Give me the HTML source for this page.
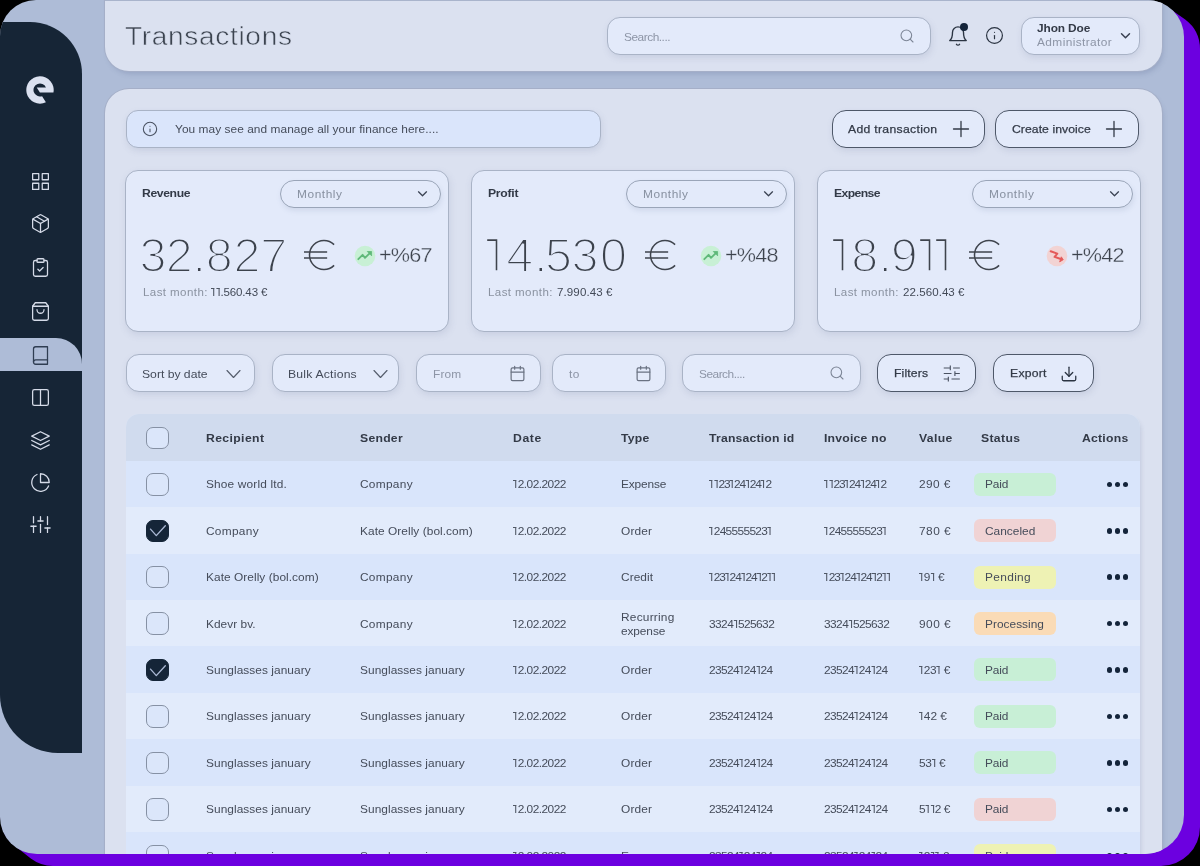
<!DOCTYPE html>
<html>
<head>
<meta charset="utf-8">
<title>Transactions</title>
<style>
*{box-sizing:border-box;margin:0;padding:0}
html,body{width:1200px;height:866px;overflow:hidden;background:#000;font-family:"Liberation Sans",sans-serif;color:#3a4252}
.abs{position:absolute}
#purple{position:absolute;left:0;top:0}
#frame{will-change:transform;position:absolute;left:0;top:0;width:1184px;height:854px;background:#aebcd7;border-radius:36px 37px 39px 37px;overflow:hidden}
#side{position:absolute;left:0;top:22px;width:82px;height:731px;background:#162536;border-radius:0 52px 0 58px}
#active{position:absolute;left:0;top:316px;width:82px;height:33px;background:#aebcd7;border-radius:0 26px 0 0}
.sico{position:absolute;left:0;width:82px;display:block}
.panel{position:absolute;left:104.3px;width:1058.4px;background:#dbe1f0;border-radius:25px;border:1px solid rgba(120,135,168,.55);box-shadow:2px 4px 5px -2px rgba(90,105,145,.26)}
#head{top:-40px;height:111.8px}
#main{top:88px;height:820px}
.field{position:absolute;background:#e3eafa;border:1px solid #a9b3c6;border-radius:13px;box-shadow:1px 3px 6px rgba(110,125,160,.17)}
.btn{position:absolute;background:#e3eafa;border:1px solid #4e5869;border-radius:14px;box-shadow:1px 3px 6px rgba(110,125,160,.17)}
.t{position:absolute;white-space:nowrap;transform-origin:0 0}
.card{position:absolute;top:170px;width:324px;height:162px;background:#e3eafa;border:1px solid #a9b3c6;border-radius:13px;box-shadow:1px 3px 7px rgba(110,125,160,.17)}
.pill{position:absolute;width:161px;height:28px;border:1px solid #9aa5b8;border-radius:14px;background:#e3eafa;box-shadow:1px 3px 5px rgba(110,125,160,.15)}
#table{box-shadow:3px 3px 4px -2px rgba(110,125,160,.22);position:absolute;left:126px;top:414.3px;width:1014px;height:480px;border-radius:13px 13px 0 0;overflow:hidden;background:#e2ebfb}
.row{position:absolute;left:0;width:1014px;height:46.43px}
.row.h{background:#d0dbee}
.row.o{background:#d9e5fb}
.row.e{background:#e2ebfb}
.cb{position:absolute;left:20.4px;top:12.4px;width:22.4px;height:22.4px;border:1.2px solid #8691a4;border-radius:7px;background:#dbe6fa}
.cb.on{background:#152538;border-color:#152538}
.st{position:absolute;left:848px;top:12px;width:82px;height:23px;border-radius:6px}
.paid{background:#c8efd6}.canc{background:#f0d3d4}.pend{background:#eef2b4}.proc{background:#fadbb6}
.dots{position:absolute;left:980.7px;top:20.9px;width:24px;height:6px}
.dots i{position:absolute;top:0;width:5.5px;height:5.5px;border-radius:50%;background:#14243a}
.dots i:nth-child(2){left:8.15px}.dots i:nth-child(3){left:16.3px}
.bigc{position:absolute;top:226.5px;width:40px;text-align:center;font-size:48.5px;line-height:56px;color:#3c424c;-webkit-text-stroke:2.1px #e3eafa}
.n1{display:inline-block;box-sizing:border-box;width:3.1px;height:7.9px;border-top:1px solid currentColor;border-right:1.05px solid currentColor;margin:0 .9px 0 .4px;opacity:.92}
</style>
</head>
<body>
<svg id="purple" width="1200" height="866" viewBox="0 0 1200 866"><path d="M0.8,37.8A37,37 0 0 1 37.8,0.8H1147A37,37 0 0 1 1169.20,8.20L1185.20,19.40A37,37 0 0 1 1200,49V827A39,39 0 0 1 1161,866H53A37,37 0 0 1 30.80,858.60L15.60,846.60A37,37 0 0 1 0.8,817Z" fill="#6c00e0"/></svg>
<div id="frame">
  <div id="side">
    <div id="active"></div>
    <svg class="abs" style="left:25.2px;top:52.8px" width="30" height="30" viewBox="-15 -15 30 30"><path d="M-3.3,-2.6H5.96A6.5,6.5 0 1 0 2.09,6.150L5.900,12.360A13.700,13.700 0 1 1 13.450,2.600H-0.100Z" fill="#dbe1f0"/></svg>
    <svg class="abs" style="left:30px;top:148.75px" width="21" height="21" viewBox="0 0 24 24" fill="none" stroke="#d5dbe8" stroke-width="1.45" stroke-linecap="round" stroke-linejoin="round"><rect x="3" y="3" width="7" height="7"/><rect x="14" y="3" width="7" height="7"/><rect x="14" y="14" width="7" height="7"/><rect x="3" y="14" width="7" height="7"/></svg>
    <svg class="abs" style="left:30px;top:190.90px" width="21" height="21" viewBox="0 0 24 24" fill="none" stroke="#d5dbe8" stroke-width="1.45" stroke-linecap="round" stroke-linejoin="round"><line x1="16.5" y1="9.4" x2="7.5" y2="4.21"/><path d="M21 16V8a2 2 0 0 0-1-1.730l-7-4a2 2 0 0 0-2 0l-7 4A2 2 0 0 0 3 8v8a2 2 0 0 0 1 1.730l7 4a2 2 0 0 0 2 0l7-4A2 2 0 0 0 21 16z"/><polyline points="3.270 6.960 12 12.010 20.730 6.960"/><line x1="12" y1="22.080" x2="12" y2="12"/></svg>
    <svg class="abs" style="left:30px;top:234.50px" width="21" height="21" viewBox="0 0 24 24" fill="none" stroke="#d5dbe8" stroke-width="1.45" stroke-linecap="round" stroke-linejoin="round"><path d="M16 4h2a2 2 0 0 1 2 2v14a2 2 0 0 1-2 2H6a2 2 0 0 1-2-2V6a2 2 0 0 1 2-2h2"/><rect x="8" y="2" width="8" height="4" rx="1" ry="1"/><polyline points="9 14 11 16 15 12"/></svg>
    <svg class="abs" style="left:30px;top:278.90px" width="21" height="21" viewBox="0 0 24 24" fill="none" stroke="#d5dbe8" stroke-width="1.45" stroke-linecap="round" stroke-linejoin="round"><path d="M6 2L3 6v14a2 2 0 0 0 2 2h14a2 2 0 0 0 2-2V6l-3-4z"/><line x1="3" y1="6" x2="21" y2="6"/><path d="M16 10a4 4 0 0 1-8 0"/></svg>
    <svg class="abs" style="left:30px;top:322.85px" width="21" height="21" viewBox="0 0 24 24" fill="none" stroke="#2f3d52" stroke-width="1.45" stroke-linecap="round" stroke-linejoin="round"><path d="M4 19.500A2.500 2.500 0 0 1 6.500 17H20"/><path d="M6.500 2H20v20H6.500A2.500 2.500 0 0 1 4 19.500v-15A2.500 2.500 0 0 1 6.500 2z"/></svg>
    <svg class="abs" style="left:30px;top:364.70px" width="21" height="21" viewBox="0 0 24 24" fill="none" stroke="#d5dbe8" stroke-width="1.45" stroke-linecap="round" stroke-linejoin="round"><path d="M12 3h7a2 2 0 0 1 2 2v14a2 2 0 0 1-2 2h-7m0-18H5a2 2 0 0 0-2 2v14a2 2 0 0 0 2 2h7m0-18v18"/></svg>
    <svg class="abs" style="left:30px;top:407.50px" width="21" height="21" viewBox="0 0 24 24" fill="none" stroke="#d5dbe8" stroke-width="1.45" stroke-linecap="round" stroke-linejoin="round"><polygon points="12 2 2 7 12 12 22 7 12 2"/><polyline points="2 17 12 22 22 17"/><polyline points="2 12 12 17 22 12"/></svg>
    <svg class="abs" style="left:30px;top:449.80px" width="21" height="21" viewBox="0 0 24 24" fill="none" stroke="#d5dbe8" stroke-width="1.45" stroke-linecap="round" stroke-linejoin="round"><path d="M21.210 15.890A10 10 0 1 1 8 2.830"/><path d="M22 12A10 10 0 0 0 12 2v10z"/></svg>
    <svg class="abs" style="left:30px;top:491.90px" width="21" height="21" viewBox="0 0 24 24" fill="none" stroke="#d5dbe8" stroke-width="1.45" stroke-linecap="round" stroke-linejoin="round"><line x1="4" y1="21" x2="4" y2="14"/><line x1="4" y1="10" x2="4" y2="3"/><line x1="12" y1="21" x2="12" y2="12"/><line x1="12" y1="8" x2="12" y2="3"/><line x1="20" y1="21" x2="20" y2="16"/><line x1="20" y1="12" x2="20" y2="3"/><line x1="1" y1="14" x2="7" y2="14"/><line x1="9" y1="8" x2="15" y2="8"/><line x1="17" y1="16" x2="23" y2="16"/></svg>
  </div>
  <div class="panel" id="head"></div>
  <div class="panel" id="main"></div>
<div class="t" style="left:124.8px;top:20px;font-size:26px;line-height:32px;color:#3c4450;letter-spacing:0.61px;-webkit-text-stroke:.55px #dbe1f0;transform:scaleX(1.08);">Transactions</div>
<div class="abs" style="left:105px;top:0;width:1057px;height:1px;background:rgba(120,135,168,.5)"></div>
<div class="field" style="left:607px;top:17px;width:323.6px;height:38px"></div>
<div class="t" style="left:623.6px;top:30px;font-size:11px;line-height:14px;color:#8d95a6;letter-spacing:-0.44px;transform:scaleX(1.08);">Search....</div>
<svg class="abs" style="left:899px;top:28px" width="16" height="16" viewBox="0 0 24 24" fill="none" stroke="#7c8596" stroke-width="1.6" stroke-linecap="round"><circle cx="11" cy="11" r="8"/><line x1="21" y1="21" x2="16.65" y2="16.65"/></svg>
<svg class="abs" style="left:947px;top:25px" width="22" height="22" viewBox="0 0 24 24" fill="none" stroke="#2b3442" stroke-width="1.5" stroke-linecap="round" stroke-linejoin="round"><path d="M18 8A6 6 0 0 0 6 8c0 7-3 9-3 9h18s-3-2-3-9"/><path d="M13.73 21a2 2 0 0 1-3.46 0"/></svg>
<div class="abs" style="left:959.5px;top:22.5px;width:8px;height:8px;border-radius:50%;background:#14243a"></div>
<svg class="abs" style="left:985px;top:26px" width="19" height="19" viewBox="0 0 24 24" fill="none" stroke="#2b3442" stroke-width="1.5" stroke-linecap="round" stroke-linejoin="round"><circle cx="12" cy="12" r="10"/><line x1="12" y1="16" x2="12" y2="12"/><line x1="12" y1="8" x2="12.01" y2="8"/></svg>
<div class="field" style="left:1021px;top:17px;width:119px;height:38px"></div>
<div class="t" style="left:1037.0px;top:21px;font-size:11px;line-height:14px;color:#333a47;font-weight:700;letter-spacing:-0.11px;transform:scaleX(1.08);">Jhon Doe</div>
<div class="t" style="left:1037.0px;top:35px;font-size:11px;line-height:14px;color:#8d95a6;letter-spacing:0.37px;transform:scaleX(1.08);">Administrator</div>
<svg class="abs" style="left:1120px;top:32px" width="11" height="8" viewBox="0 0 11 8" fill="none" stroke="#3a4252" stroke-width="1.5" stroke-linecap="round" stroke-linejoin="round"><path d="M1.5 1.800 5.500 5.800 9.500 1.800"/></svg>
<div class="abs" style="left:126px;top:110px;width:475px;height:38px;background:#dae5fb;border:1px solid #a9b3c6;border-radius:12px;box-shadow:1px 3px 6px rgba(110,125,160,.17)"></div>
<svg class="abs" style="left:142px;top:121px" width="16" height="16" viewBox="0 0 24 24" fill="none" stroke="#4a5262" stroke-width="1.6" stroke-linecap="round" stroke-linejoin="round"><circle cx="12" cy="12" r="10"/><line x1="12" y1="16" x2="12" y2="12"/><line x1="12" y1="8" x2="12.01" y2="8"/></svg>
<div class="t" style="left:174.8px;top:122px;font-size:11px;line-height:14px;color:#454c5a;letter-spacing:0.05px;transform:scaleX(1.08);">You may see and manage all your finance here....</div>
<div class="btn" style="left:832px;top:110px;width:153px;height:38px"></div>
<div class="t" style="left:848.3px;top:122px;font-size:11.3px;line-height:14px;color:#333a47;letter-spacing:0.28px;-webkit-text-stroke:.25px #333a47;transform:scaleX(1.08);">Add transaction</div>
<svg class="abs" style="left:952px;top:120px" width="18" height="18" viewBox="0 0 18 18" stroke="#333a47" stroke-width="1.3" stroke-linecap="round"><path d="M9 1.500V16.500M1.500 9H16.500"/></svg>
<div class="btn" style="left:995px;top:110px;width:144px;height:38px"></div>
<div class="t" style="left:1012.3px;top:122px;font-size:11.3px;line-height:14px;color:#333a47;letter-spacing:0.05px;-webkit-text-stroke:.25px #333a47;transform:scaleX(1.08);">Create invoice</div>
<svg class="abs" style="left:1105px;top:120px" width="18" height="18" viewBox="0 0 18 18" stroke="#333a47" stroke-width="1.3" stroke-linecap="round"><path d="M9 1.500V16.500M1.500 9H16.500"/></svg>
<div class="card" style="left:125.3px"></div>
<div class="t" style="left:142.3px;top:186px;font-size:11.3px;line-height:14px;color:#333a47;font-weight:700;letter-spacing:-0.36px;transform:scaleX(1.08);">Revenue</div>
<div class="pill" style="left:280.2px;top:180px"></div>
<div class="t" style="left:296.9px;top:187px;font-size:11px;line-height:14px;color:#8790a0;letter-spacing:0.52px;transform:scaleX(1.08);">Monthly</div>
<svg class="abs" style="left:417.1px;top:190.3px" width="11" height="8" viewBox="0 0 11 8" fill="none" stroke="#3a4252" stroke-width="1.250" stroke-linecap="round" stroke-linejoin="round"><path d="M1.5 1.800 5.500 5.800 9.500 1.800"/></svg>
<div class="bigc" style="left:133.00px">3</div>
<div class="bigc" style="left:159.30px">2</div>
<div class="bigc" style="left:179.20px">.</div>
<div class="bigc" style="left:199.30px">8</div>
<div class="bigc" style="left:227.00px">2</div>
<div class="bigc" style="left:253.70px">7</div>
<svg class="abs" style="left:303.85px;top:234.7px" width="40" height="40" viewBox="-20 -20 40 40" fill="none" stroke="#3f444d" stroke-width="1.5"><path d="M10.1,-10.4A14.5,14.500 0 1 0 10.100,10.400M-20.150,-2.900H3.150M-20.150,3.100H3.150"/></svg>
<svg class="abs" style="left:353.1px;top:243.7px" width="24" height="24" viewBox="-12 -12 24 24"><circle r="10.3" fill="#c8f0d5"/><path d="M-6.7,3.200L-2.400,-1.200L0,1.900L4.600,-2.700" fill="none" stroke="#5fb979" stroke-width="1.800" stroke-linecap="round" stroke-linejoin="round"/><path d="M2.300,-4.500H6.600V-0.200Z" fill="#5fb979" stroke="#5fb979" stroke-width="0.800" stroke-linejoin="round"/></svg>
<div class="t" style="left:379.4px;top:243px;font-size:20px;line-height:24px;color:#3c424c;letter-spacing:-0.74px;-webkit-text-stroke:.3px #e3eafa;transform:scaleX(1.08);">+%67</div>
<div class="t" style="left:142.5px;top:285px;font-size:10.7px;line-height:14px;color:#8a92a0;letter-spacing:0.38px;transform:scaleX(1.08);">Last month:</div>
<div class="t" style="left:211.0px;top:285px;font-size:10.7px;line-height:14px;color:#434a57;letter-spacing:-0.14px;transform:scaleX(1.08);"><i class="n1"></i><i class="n1"></i>.560.43 €</div>
<div class="card" style="left:471.2px"></div>
<div class="t" style="left:488.2px;top:186px;font-size:11.3px;line-height:14px;color:#333a47;font-weight:700;letter-spacing:-0.25px;transform:scaleX(1.08);">Profit</div>
<div class="pill" style="left:626.1px;top:180px"></div>
<div class="t" style="left:642.8px;top:187px;font-size:11px;line-height:14px;color:#8790a0;letter-spacing:0.52px;transform:scaleX(1.08);">Monthly</div>
<svg class="abs" style="left:763.0px;top:190.3px" width="11" height="8" viewBox="0 0 11 8" fill="none" stroke="#3a4252" stroke-width="1.250" stroke-linecap="round" stroke-linejoin="round"><path d="M1.5 1.800 5.500 5.800 9.500 1.800"/></svg>
<svg class="abs" style="left:487.10px;top:236px" width="16" height="38" viewBox="0 0 16 38" fill="none" stroke="#3f444d" stroke-width="1.55" stroke-linejoin="miter"><path d="M0.2,4.1H9.500V34.300"/></svg>
<div class="bigc" style="left:499.75px">4</div>
<div class="bigc" style="left:520.80px">.</div>
<div class="bigc" style="left:538.50px">5</div>
<div class="bigc" style="left:565.00px">3</div>
<div class="bigc" style="left:593.60px">0</div>
<svg class="abs" style="left:644.65px;top:234.7px" width="40" height="40" viewBox="-20 -20 40 40" fill="none" stroke="#3f444d" stroke-width="1.5"><path d="M10.1,-10.4A14.5,14.500 0 1 0 10.100,10.400M-20.150,-2.900H3.150M-20.150,3.100H3.150"/></svg>
<svg class="abs" style="left:699.0px;top:243.7px" width="24" height="24" viewBox="-12 -12 24 24"><circle r="10.3" fill="#c8f0d5"/><path d="M-6.7,3.200L-2.400,-1.200L0,1.900L4.600,-2.700" fill="none" stroke="#5fb979" stroke-width="1.800" stroke-linecap="round" stroke-linejoin="round"/><path d="M2.300,-4.500H6.600V-0.200Z" fill="#5fb979" stroke="#5fb979" stroke-width="0.800" stroke-linejoin="round"/></svg>
<div class="t" style="left:725.3px;top:243px;font-size:20px;line-height:24px;color:#3c424c;letter-spacing:-0.74px;-webkit-text-stroke:.3px #e3eafa;transform:scaleX(1.08);">+%48</div>
<div class="t" style="left:488.4px;top:285px;font-size:10.7px;line-height:14px;color:#8a92a0;letter-spacing:0.38px;transform:scaleX(1.08);">Last month:</div>
<div class="t" style="left:556.9px;top:285px;font-size:10.7px;line-height:14px;color:#434a57;letter-spacing:0.10px;transform:scaleX(1.08);">7.990.43 €</div>
<div class="card" style="left:817.1px"></div>
<div class="t" style="left:834.1px;top:186px;font-size:11.3px;line-height:14px;color:#333a47;font-weight:700;letter-spacing:-0.56px;transform:scaleX(1.08);">Expense</div>
<div class="pill" style="left:972.0px;top:180px"></div>
<div class="t" style="left:988.7px;top:187px;font-size:11px;line-height:14px;color:#8790a0;letter-spacing:0.52px;transform:scaleX(1.08);">Monthly</div>
<svg class="abs" style="left:1108.9px;top:190.3px" width="11" height="8" viewBox="0 0 11 8" fill="none" stroke="#3a4252" stroke-width="1.250" stroke-linecap="round" stroke-linejoin="round"><path d="M1.5 1.800 5.500 5.800 9.500 1.800"/></svg>
<svg class="abs" style="left:833.25px;top:236px" width="16" height="38" viewBox="0 0 16 38" fill="none" stroke="#3f444d" stroke-width="1.55" stroke-linejoin="miter"><path d="M0.2,4.1H9.500V34.300"/></svg>
<div class="bigc" style="left:844.80px">8</div>
<div class="bigc" style="left:865.20px">.</div>
<div class="bigc" style="left:884.20px">9</div>
<svg class="abs" style="left:919.50px;top:236px" width="16" height="38" viewBox="0 0 16 38" fill="none" stroke="#3f444d" stroke-width="1.55" stroke-linejoin="miter"><path d="M0.2,4.1H9.500V34.300"/></svg>
<svg class="abs" style="left:936.30px;top:236px" width="16" height="38" viewBox="0 0 16 38" fill="none" stroke="#3f444d" stroke-width="1.55" stroke-linejoin="miter"><path d="M0.2,4.1H9.500V34.300"/></svg>
<svg class="abs" style="left:968.95px;top:234.7px" width="40" height="40" viewBox="-20 -20 40 40" fill="none" stroke="#3f444d" stroke-width="1.5"><path d="M10.1,-10.4A14.5,14.500 0 1 0 10.100,10.400M-20.150,-2.900H3.150M-20.150,3.100H3.150"/></svg>
<svg class="abs" style="left:1045.0px;top:243.7px" width="24" height="24" viewBox="-12 -12 24 24"><circle r="10.3" fill="#f2d3d3"/><path d="M-6.300,-4.700L0.300,-2.400L-2.400,0.900L3.800,3" fill="none" stroke="#e45a5a" stroke-width="2" stroke-linecap="round" stroke-linejoin="round"/><path d="M4.300,0.800L6.300,3.700L2.600,5.900Z" fill="#e45a5a" stroke="#e45a5a" stroke-width="0.800" stroke-linejoin="round"/></svg>
<div class="t" style="left:1071.2px;top:243px;font-size:20px;line-height:24px;color:#3c424c;letter-spacing:-0.74px;-webkit-text-stroke:.3px #e3eafa;transform:scaleX(1.08);">+%42</div>
<div class="t" style="left:834.3px;top:285px;font-size:10.7px;line-height:14px;color:#8a92a0;letter-spacing:0.38px;transform:scaleX(1.08);">Last month:</div>
<div class="t" style="left:902.8px;top:285px;font-size:10.7px;line-height:14px;color:#434a57;letter-spacing:0.05px;transform:scaleX(1.08);">22.560.43 €</div>
<div class="field" style="left:126px;top:354px;width:129px;height:38px"></div>
<div class="t" style="left:142.0px;top:367px;font-size:11.3px;line-height:14px;color:#454c5a;letter-spacing:-0.02px;transform:scaleX(1.08);">Sort by date</div>
<svg class="abs" style="left:225.5px;top:368.5px" width="15" height="10" viewBox="0 0 15 10" fill="none" stroke="#555d6c" stroke-width="1.150" stroke-linecap="round" stroke-linejoin="round"><path d="M1 1.500 7.500 8.500 14 1.500"/></svg>
<div class="field" style="left:272px;top:354px;width:127px;height:38px"></div>
<div class="t" style="left:288.3px;top:367px;font-size:11.3px;line-height:14px;color:#454c5a;letter-spacing:0.19px;transform:scaleX(1.08);">Bulk Actions</div>
<svg class="abs" style="left:372.5px;top:368.5px" width="15" height="10" viewBox="0 0 15 10" fill="none" stroke="#555d6c" stroke-width="1.150" stroke-linecap="round" stroke-linejoin="round"><path d="M1 1.500 7.500 8.500 14 1.500"/></svg>
<div class="field" style="left:416px;top:354px;width:125px;height:38px"></div>
<div class="t" style="left:432.5px;top:367px;font-size:11px;line-height:14px;color:#8d95a6;letter-spacing:0.17px;transform:scaleX(1.08);">From</div>
<svg class="abs" style="left:508.5px;top:364.7px" width="17" height="17" viewBox="0 0 24 24" fill="none" stroke="#6a7282" stroke-width="1.7" stroke-linecap="round" stroke-linejoin="round"><rect x="3" y="4" width="18" height="18" rx="2" ry="2"/><line x1="16" y1="2" x2="16" y2="6"/><line x1="8" y1="2" x2="8" y2="6"/><line x1="3" y1="10" x2="21" y2="10"/></svg>
<div class="field" style="left:552px;top:354px;width:114px;height:38px"></div>
<div class="t" style="left:568.8px;top:367px;font-size:11px;line-height:14px;color:#8d95a6;letter-spacing:0.50px;transform:scaleX(1.08);">to</div>
<svg class="abs" style="left:634.8px;top:364.7px" width="17" height="17" viewBox="0 0 24 24" fill="none" stroke="#6a7282" stroke-width="1.7" stroke-linecap="round" stroke-linejoin="round"><rect x="3" y="4" width="18" height="18" rx="2" ry="2"/><line x1="16" y1="2" x2="16" y2="6"/><line x1="8" y1="2" x2="8" y2="6"/><line x1="3" y1="10" x2="21" y2="10"/></svg>
<div class="field" style="left:682px;top:354px;width:179px;height:38px"></div>
<div class="t" style="left:698.8px;top:367px;font-size:11px;line-height:14px;color:#8d95a6;letter-spacing:-0.46px;transform:scaleX(1.08);">Search....</div>
<svg class="abs" style="left:829px;top:365px" width="16" height="16" viewBox="0 0 24 24" fill="none" stroke="#7c8596" stroke-width="1.6" stroke-linecap="round"><circle cx="11" cy="11" r="8"/><line x1="21" y1="21" x2="16.65" y2="16.65"/></svg>
<div class="btn" style="left:877px;top:354px;width:99px;height:38px"></div>
<div class="t" style="left:894.4px;top:366px;font-size:11.3px;line-height:14px;color:#333a47;letter-spacing:0.12px;-webkit-text-stroke:.25px #333a47;transform:scaleX(1.08);">Filters</div>
<svg class="abs" style="left:942px;top:363.5px" width="19" height="19" viewBox="0 0 24 24" fill="none" stroke="#4a5261" stroke-width="1.450" stroke-linecap="butt"><path d="M2.200 5H10.500M10.500 2V8M14 5H22.500M2.200 12H12M16.300 9V15M16.300 12H22.500M2.200 19H8M8 16V22M12 19H22.500"/></svg>
<div class="btn" style="left:993px;top:354px;width:101px;height:38px"></div>
<div class="t" style="left:1009.6px;top:366px;font-size:11.3px;line-height:14px;color:#333a47;letter-spacing:0.22px;-webkit-text-stroke:.25px #333a47;transform:scaleX(1.08);">Export</div>
<svg class="abs" style="left:1060px;top:364.5px" width="18" height="18" viewBox="0 0 24 24" fill="none" stroke="#2b3442" stroke-width="1.7" stroke-linecap="round" stroke-linejoin="round"><path d="M21 15v4a2 2 0 0 1-2 2H5a2 2 0 0 1-2-2v-4"/><polyline points="7 10 12 15 17 10"/><line x1="12" y1="15" x2="12" y2="3"/></svg>
<div id="table">
<div class="row h" style="top:0"><div class="cb"></div></div>
<div class="row o" style="top:46.43px"><div class="cb"></div><div class="st paid"></div><div class="dots"><i></i><i></i><i></i></div></div>
<div class="row e" style="top:92.86px"><div class="cb on"><svg class="abs" style="left:-1.2px;top:-1.2px" width="23" height="23" viewBox="0 0 23 23" fill="none" stroke="#aab8d4" stroke-width="1.35" stroke-linecap="round" stroke-linejoin="round"><path d="M4.500 10.100 10.300 16.600 19.300 6.700"/></svg></div><div class="st canc"></div><div class="dots"><i></i><i></i><i></i></div></div>
<div class="row o" style="top:139.29px"><div class="cb"></div><div class="st pend"></div><div class="dots"><i></i><i></i><i></i></div></div>
<div class="row e" style="top:185.72px"><div class="cb"></div><div class="st proc"></div><div class="dots"><i></i><i></i><i></i></div></div>
<div class="row o" style="top:232.15px"><div class="cb on"><svg class="abs" style="left:-1.2px;top:-1.2px" width="23" height="23" viewBox="0 0 23 23" fill="none" stroke="#aab8d4" stroke-width="1.35" stroke-linecap="round" stroke-linejoin="round"><path d="M4.500 10.100 10.300 16.600 19.300 6.700"/></svg></div><div class="st paid"></div><div class="dots"><i></i><i></i><i></i></div></div>
<div class="row e" style="top:278.58px"><div class="cb"></div><div class="st paid"></div><div class="dots"><i></i><i></i><i></i></div></div>
<div class="row o" style="top:325.01px"><div class="cb"></div><div class="st paid"></div><div class="dots"><i></i><i></i><i></i></div></div>
<div class="row e" style="top:371.44px"><div class="cb"></div><div class="st canc"></div><div class="dots"><i></i><i></i><i></i></div></div>
<div class="row o" style="top:417.87px"><div class="cb"></div><div class="st pend"></div><div class="dots"><i></i><i></i><i></i></div></div>
</div>
<div class="t" style="left:206.0px;top:431px;font-size:11.3px;line-height:14px;color:#333a47;font-weight:700;letter-spacing:0.35px;transform:scaleX(1.08);">Recipient</div>
<div class="t" style="left:360.0px;top:431px;font-size:11.3px;line-height:14px;color:#333a47;font-weight:700;letter-spacing:0.24px;transform:scaleX(1.08);">Sender</div>
<div class="t" style="left:513.3px;top:431px;font-size:11.3px;line-height:14px;color:#333a47;font-weight:700;letter-spacing:0.55px;transform:scaleX(1.08);">Date</div>
<div class="t" style="left:620.7px;top:431px;font-size:11.3px;line-height:14px;color:#333a47;font-weight:700;letter-spacing:0.22px;transform:scaleX(1.08);">Type</div>
<div class="t" style="left:708.7px;top:431px;font-size:11.3px;line-height:14px;color:#333a47;font-weight:700;letter-spacing:0.18px;transform:scaleX(1.08);">Transaction id</div>
<div class="t" style="left:823.7px;top:431px;font-size:11.3px;line-height:14px;color:#333a47;font-weight:700;letter-spacing:0.21px;transform:scaleX(1.08);">Invoice no</div>
<div class="t" style="left:919.3px;top:431px;font-size:11.3px;line-height:14px;color:#333a47;font-weight:700;letter-spacing:0.32px;transform:scaleX(1.08);">Value</div>
<div class="t" style="left:981.0px;top:431px;font-size:11.3px;line-height:14px;color:#333a47;font-weight:700;letter-spacing:0.31px;transform:scaleX(1.08);">Status</div>
<div class="t" style="left:1082.0px;top:431px;font-size:11.3px;line-height:14px;color:#333a47;font-weight:700;letter-spacing:0.22px;transform:scaleX(1.08);">Actions</div>
<div class="t" style="left:206.0px;top:477px;font-size:11px;line-height:14px;color:#454c5a;letter-spacing:0.14px;transform:scaleX(1.08);">Shoe world ltd.</div>
<div class="t" style="left:360.0px;top:477px;font-size:11px;line-height:14px;color:#454c5a;letter-spacing:0.27px;transform:scaleX(1.08);">Company</div>
<div class="t" style="left:513.3px;top:477px;font-size:11px;line-height:14px;color:#454c5a;letter-spacing:-0.49px;transform:scaleX(1.08);"><i class="n1"></i>2.02.2022</div>
<div class="t" style="left:620.7px;top:477px;font-size:11px;line-height:14px;color:#454c5a;letter-spacing:-0.14px;transform:scaleX(1.08);">Expense</div>
<div class="t" style="left:708.5px;top:477px;font-size:11px;line-height:14px;color:#454c5a;letter-spacing:-1.06px;transform:scaleX(1.08);"><i class="n1"></i><i class="n1"></i>23<i class="n1"></i>24<i class="n1"></i>24<i class="n1"></i>2</div>
<div class="t" style="left:823.5px;top:477px;font-size:11px;line-height:14px;color:#454c5a;letter-spacing:-1.06px;transform:scaleX(1.08);"><i class="n1"></i><i class="n1"></i>23<i class="n1"></i>24<i class="n1"></i>24<i class="n1"></i>2</div>
<div class="t" style="left:919.3px;top:477px;font-size:11px;line-height:14px;color:#454c5a;letter-spacing:0.36px;transform:scaleX(1.08);">290 €</div>
<div class="t" style="left:985.0px;top:477px;font-size:11px;line-height:14px;color:#454c5a;letter-spacing:-0.15px;transform:scaleX(1.08);">Paid</div>
<div class="t" style="left:206.0px;top:524px;font-size:11px;line-height:14px;color:#454c5a;letter-spacing:0.27px;transform:scaleX(1.08);">Company</div>
<div class="t" style="left:360.0px;top:524px;font-size:11px;line-height:14px;color:#454c5a;letter-spacing:0.05px;transform:scaleX(1.08);">Kate Orelly (bol.com)</div>
<div class="t" style="left:513.3px;top:524px;font-size:11px;line-height:14px;color:#454c5a;letter-spacing:-0.49px;transform:scaleX(1.08);"><i class="n1"></i>2.02.2022</div>
<div class="t" style="left:620.7px;top:524px;font-size:11px;line-height:14px;color:#454c5a;letter-spacing:0.14px;transform:scaleX(1.08);">Order</div>
<div class="t" style="left:708.5px;top:524px;font-size:11px;line-height:14px;color:#454c5a;letter-spacing:-0.61px;transform:scaleX(1.08);"><i class="n1"></i>245555523<i class="n1"></i></div>
<div class="t" style="left:823.5px;top:524px;font-size:11px;line-height:14px;color:#454c5a;letter-spacing:-0.61px;transform:scaleX(1.08);"><i class="n1"></i>245555523<i class="n1"></i></div>
<div class="t" style="left:919.3px;top:524px;font-size:11px;line-height:14px;color:#454c5a;letter-spacing:0.45px;transform:scaleX(1.08);">780 €</div>
<div class="t" style="left:985.0px;top:524px;font-size:11px;line-height:14px;color:#454c5a;letter-spacing:0.01px;transform:scaleX(1.08);">Canceled</div>
<div class="t" style="left:206.0px;top:570px;font-size:11px;line-height:14px;color:#454c5a;letter-spacing:0.05px;transform:scaleX(1.08);">Kate Orelly (bol.com)</div>
<div class="t" style="left:360.0px;top:570px;font-size:11px;line-height:14px;color:#454c5a;letter-spacing:0.27px;transform:scaleX(1.08);">Company</div>
<div class="t" style="left:513.3px;top:570px;font-size:11px;line-height:14px;color:#454c5a;letter-spacing:-0.49px;transform:scaleX(1.08);"><i class="n1"></i>2.02.2022</div>
<div class="t" style="left:620.7px;top:570px;font-size:11px;line-height:14px;color:#454c5a;letter-spacing:0.06px;transform:scaleX(1.08);">Credit</div>
<div class="t" style="left:708.5px;top:570px;font-size:11px;line-height:14px;color:#454c5a;letter-spacing:-0.97px;transform:scaleX(1.08);"><i class="n1"></i>23<i class="n1"></i>24<i class="n1"></i>24<i class="n1"></i>2<i class="n1"></i><i class="n1"></i></div>
<div class="t" style="left:823.5px;top:570px;font-size:11px;line-height:14px;color:#454c5a;letter-spacing:-0.97px;transform:scaleX(1.08);"><i class="n1"></i>23<i class="n1"></i>24<i class="n1"></i>24<i class="n1"></i>2<i class="n1"></i><i class="n1"></i></div>
<div class="t" style="left:919.3px;top:570px;font-size:11px;line-height:14px;color:#454c5a;letter-spacing:-0.13px;transform:scaleX(1.08);"><i class="n1"></i>9<i class="n1"></i> €</div>
<div class="t" style="left:985.0px;top:570px;font-size:11px;line-height:14px;color:#454c5a;letter-spacing:0.32px;transform:scaleX(1.08);">Pending</div>
<div class="t" style="left:206.0px;top:617px;font-size:11px;line-height:14px;color:#454c5a;letter-spacing:0.04px;transform:scaleX(1.08);">Kdevr bv.</div>
<div class="t" style="left:360.0px;top:617px;font-size:11px;line-height:14px;color:#454c5a;letter-spacing:0.27px;transform:scaleX(1.08);">Company</div>
<div class="t" style="left:513.3px;top:617px;font-size:11px;line-height:14px;color:#454c5a;letter-spacing:-0.49px;transform:scaleX(1.08);"><i class="n1"></i>2.02.2022</div>
<div class="t" style="left:620.7px;top:610px;font-size:11px;line-height:14px;color:#454c5a;letter-spacing:0.21px;transform:scaleX(1.08);">Recurring</div>
<div class="t" style="left:620.7px;top:624px;font-size:11px;line-height:14px;color:#454c5a;letter-spacing:-0.09px;transform:scaleX(1.08);">expense</div>
<div class="t" style="left:708.5px;top:617px;font-size:11px;line-height:14px;color:#454c5a;letter-spacing:-0.52px;transform:scaleX(1.08);">3324<i class="n1"></i>525632</div>
<div class="t" style="left:823.5px;top:617px;font-size:11px;line-height:14px;color:#454c5a;letter-spacing:-0.52px;transform:scaleX(1.08);">3324<i class="n1"></i>525632</div>
<div class="t" style="left:919.3px;top:617px;font-size:11px;line-height:14px;color:#454c5a;letter-spacing:0.45px;transform:scaleX(1.08);">900 €</div>
<div class="t" style="left:985.0px;top:617px;font-size:11px;line-height:14px;color:#454c5a;letter-spacing:0.02px;transform:scaleX(1.08);">Processing</div>
<div class="t" style="left:206.0px;top:663px;font-size:11px;line-height:14px;color:#454c5a;letter-spacing:0.05px;transform:scaleX(1.08);">Sunglasses january</div>
<div class="t" style="left:360.0px;top:663px;font-size:11px;line-height:14px;color:#454c5a;letter-spacing:0.05px;transform:scaleX(1.08);">Sunglasses january</div>
<div class="t" style="left:513.3px;top:663px;font-size:11px;line-height:14px;color:#454c5a;letter-spacing:-0.49px;transform:scaleX(1.08);"><i class="n1"></i>2.02.2022</div>
<div class="t" style="left:620.7px;top:663px;font-size:11px;line-height:14px;color:#454c5a;letter-spacing:0.14px;transform:scaleX(1.08);">Order</div>
<div class="t" style="left:708.5px;top:663px;font-size:11px;line-height:14px;color:#454c5a;letter-spacing:-0.57px;transform:scaleX(1.08);">23524<i class="n1"></i>24<i class="n1"></i>24</div>
<div class="t" style="left:823.5px;top:663px;font-size:11px;line-height:14px;color:#454c5a;letter-spacing:-0.57px;transform:scaleX(1.08);">23524<i class="n1"></i>24<i class="n1"></i>24</div>
<div class="t" style="left:919.3px;top:663px;font-size:11px;line-height:14px;color:#454c5a;letter-spacing:-0.39px;transform:scaleX(1.08);"><i class="n1"></i>23<i class="n1"></i> €</div>
<div class="t" style="left:985.0px;top:663px;font-size:11px;line-height:14px;color:#454c5a;letter-spacing:-0.15px;transform:scaleX(1.08);">Paid</div>
<div class="t" style="left:206.0px;top:709px;font-size:11px;line-height:14px;color:#454c5a;letter-spacing:0.05px;transform:scaleX(1.08);">Sunglasses january</div>
<div class="t" style="left:360.0px;top:709px;font-size:11px;line-height:14px;color:#454c5a;letter-spacing:0.05px;transform:scaleX(1.08);">Sunglasses january</div>
<div class="t" style="left:513.3px;top:709px;font-size:11px;line-height:14px;color:#454c5a;letter-spacing:-0.49px;transform:scaleX(1.08);"><i class="n1"></i>2.02.2022</div>
<div class="t" style="left:620.7px;top:709px;font-size:11px;line-height:14px;color:#454c5a;letter-spacing:0.14px;transform:scaleX(1.08);">Order</div>
<div class="t" style="left:708.5px;top:709px;font-size:11px;line-height:14px;color:#454c5a;letter-spacing:-0.57px;transform:scaleX(1.08);">23524<i class="n1"></i>24<i class="n1"></i>24</div>
<div class="t" style="left:823.5px;top:709px;font-size:11px;line-height:14px;color:#454c5a;letter-spacing:-0.57px;transform:scaleX(1.08);">23524<i class="n1"></i>24<i class="n1"></i>24</div>
<div class="t" style="left:919.3px;top:709px;font-size:11px;line-height:14px;color:#454c5a;letter-spacing:0.04px;transform:scaleX(1.08);"><i class="n1"></i>42 €</div>
<div class="t" style="left:985.0px;top:709px;font-size:11px;line-height:14px;color:#454c5a;letter-spacing:-0.15px;transform:scaleX(1.08);">Paid</div>
<div class="t" style="left:206.0px;top:756px;font-size:11px;line-height:14px;color:#454c5a;letter-spacing:0.05px;transform:scaleX(1.08);">Sunglasses january</div>
<div class="t" style="left:360.0px;top:756px;font-size:11px;line-height:14px;color:#454c5a;letter-spacing:0.05px;transform:scaleX(1.08);">Sunglasses january</div>
<div class="t" style="left:513.3px;top:756px;font-size:11px;line-height:14px;color:#454c5a;letter-spacing:-0.49px;transform:scaleX(1.08);"><i class="n1"></i>2.02.2022</div>
<div class="t" style="left:620.7px;top:756px;font-size:11px;line-height:14px;color:#454c5a;letter-spacing:0.14px;transform:scaleX(1.08);">Order</div>
<div class="t" style="left:708.5px;top:756px;font-size:11px;line-height:14px;color:#454c5a;letter-spacing:-0.57px;transform:scaleX(1.08);">23524<i class="n1"></i>24<i class="n1"></i>24</div>
<div class="t" style="left:823.5px;top:756px;font-size:11px;line-height:14px;color:#454c5a;letter-spacing:-0.57px;transform:scaleX(1.08);">23524<i class="n1"></i>24<i class="n1"></i>24</div>
<div class="t" style="left:919.3px;top:756px;font-size:11px;line-height:14px;color:#454c5a;letter-spacing:-0.35px;transform:scaleX(1.08);">53<i class="n1"></i> €</div>
<div class="t" style="left:985.0px;top:756px;font-size:11px;line-height:14px;color:#454c5a;letter-spacing:-0.15px;transform:scaleX(1.08);">Paid</div>
<div class="t" style="left:206.0px;top:802px;font-size:11px;line-height:14px;color:#454c5a;letter-spacing:0.05px;transform:scaleX(1.08);">Sunglasses january</div>
<div class="t" style="left:360.0px;top:802px;font-size:11px;line-height:14px;color:#454c5a;letter-spacing:0.05px;transform:scaleX(1.08);">Sunglasses january</div>
<div class="t" style="left:513.3px;top:802px;font-size:11px;line-height:14px;color:#454c5a;letter-spacing:-0.49px;transform:scaleX(1.08);"><i class="n1"></i>2.02.2022</div>
<div class="t" style="left:620.7px;top:802px;font-size:11px;line-height:14px;color:#454c5a;letter-spacing:0.14px;transform:scaleX(1.08);">Order</div>
<div class="t" style="left:708.5px;top:802px;font-size:11px;line-height:14px;color:#454c5a;letter-spacing:-0.57px;transform:scaleX(1.08);">23524<i class="n1"></i>24<i class="n1"></i>24</div>
<div class="t" style="left:823.5px;top:802px;font-size:11px;line-height:14px;color:#454c5a;letter-spacing:-0.57px;transform:scaleX(1.08);">23524<i class="n1"></i>24<i class="n1"></i>24</div>
<div class="t" style="left:919.3px;top:802px;font-size:11px;line-height:14px;color:#454c5a;letter-spacing:-0.39px;transform:scaleX(1.08);">5<i class="n1"></i><i class="n1"></i>2 €</div>
<div class="t" style="left:985.0px;top:802px;font-size:11px;line-height:14px;color:#454c5a;letter-spacing:-0.15px;transform:scaleX(1.08);">Paid</div>
<div class="t" style="left:206.0px;top:849px;font-size:11px;line-height:14px;color:#454c5a;letter-spacing:0.05px;transform:scaleX(1.08);">Sunglasses january</div>
<div class="t" style="left:360.0px;top:849px;font-size:11px;line-height:14px;color:#454c5a;letter-spacing:0.05px;transform:scaleX(1.08);">Sunglasses january</div>
<div class="t" style="left:513.3px;top:849px;font-size:11px;line-height:14px;color:#454c5a;letter-spacing:-0.49px;transform:scaleX(1.08);"><i class="n1"></i>2.02.2022</div>
<div class="t" style="left:620.7px;top:849px;font-size:11px;line-height:14px;color:#454c5a;letter-spacing:-0.14px;transform:scaleX(1.08);">Expense</div>
<div class="t" style="left:708.5px;top:849px;font-size:11px;line-height:14px;color:#454c5a;letter-spacing:-0.57px;transform:scaleX(1.08);">23524<i class="n1"></i>24<i class="n1"></i>24</div>
<div class="t" style="left:823.5px;top:849px;font-size:11px;line-height:14px;color:#454c5a;letter-spacing:-0.57px;transform:scaleX(1.08);">23524<i class="n1"></i>24<i class="n1"></i>24</div>
<div class="t" style="left:919.3px;top:849px;font-size:11px;line-height:14px;color:#454c5a;letter-spacing:-0.32px;transform:scaleX(1.08);"><i class="n1"></i>2<i class="n1"></i><i class="n1"></i> €</div>
<div class="t" style="left:985.0px;top:849px;font-size:11px;line-height:14px;color:#454c5a;letter-spacing:-0.15px;transform:scaleX(1.08);">Paid</div>
</div>
</body>
</html>
